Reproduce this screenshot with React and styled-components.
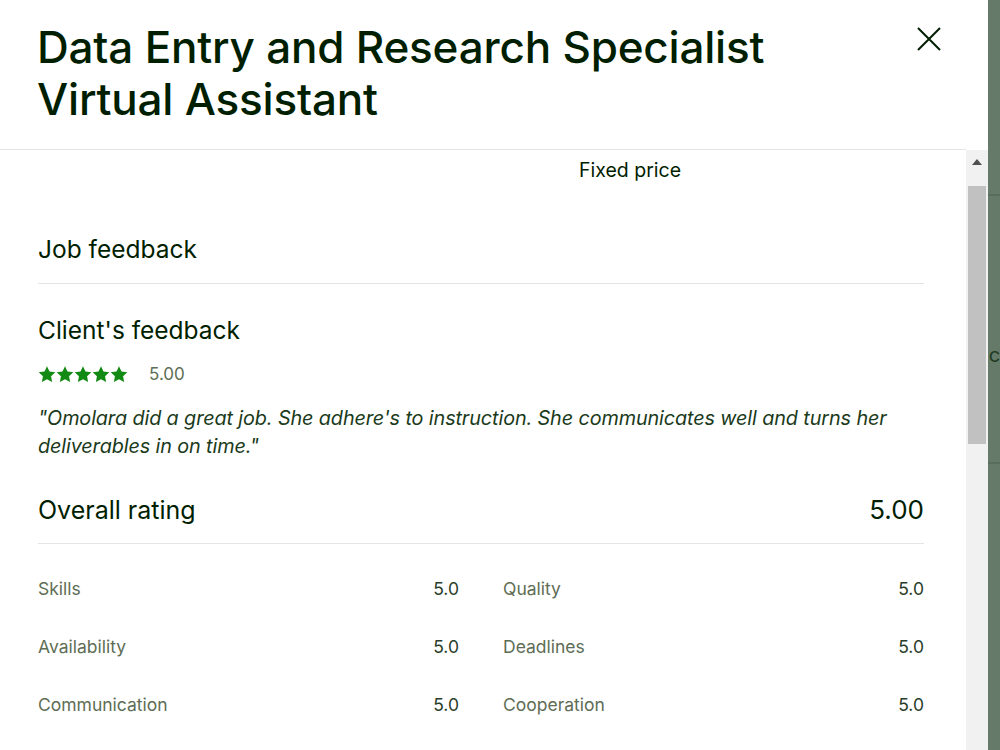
import styled, { createGlobalStyle } from "styled-components";

const GlobalStyle = createGlobalStyle`
  html, body {
    margin: 0;
    padding: 0;
    background: #667a69;
  }
  body {
    font-family: Inter, "Liberation Sans", Arial, sans-serif;
    color: #001e00;
  }
`;

const ratings = [
  ["Skills", "5.0", "Quality", "5.0"],
  ["Availability", "5.0", "Deadlines", "5.0"],
  ["Communication", "5.0", "Cooperation", "5.0"],
];

function Star() {
  return (
    <svg width="18" height="17" viewBox="0 0 24 23">
      <path
        d="M12 0.5l3.4 7.1 7.8 1-5.7 5.4 1.4 7.7L12 17.9l-6.9 3.8 1.4-7.7L0.8 8.6l7.8-1z"
        fill="#138a13"
      />
    </svg>
  );
}

function CloseIcon() {
  return (
    <svg width="26" height="26" viewBox="0 0 26 26">
      <path d="M2 2l22 22M24 2L2 24" stroke="#001e00" strokeWidth="2" fill="none" />
    </svg>
  );
}

function App() {
  return (
    <Page>
      <GlobalStyle />
      <Modal>
        <Header>
          <Title>
            Data Entry and Research Specialist
            <br />
            Virtual Assistant
          </Title>
          <CloseButton aria-label="Close">
            <CloseIcon />
          </CloseButton>
        </Header>
        <Body>
          <Content>
            <PriceRow>
              <span />
              <PriceType>Fixed price</PriceType>
            </PriceRow>
            <SectionTitle className="job">Job feedback</SectionTitle>
            <Rule />
            <SectionTitle className="client">Client's feedback</SectionTitle>
            <StarRow>
              <Stars>
                {[0, 1, 2, 3, 4].map((i) => (
                  <Star key={i} />
                ))}
              </Stars>
              <Score>5.00</Score>
            </StarRow>
            <Quote>
              "Omolara did a great job. She adhere's to instruction. She
              communicates well and turns her deliverables in on time."
            </Quote>
            <OverallRow>
              <SectionTitle>Overall rating</SectionTitle>
              <OverallScore>5.00</OverallScore>
            </OverallRow>
            <Rule />
            <RatingGrid>
              {ratings.flatMap((r) => [
                <RatingItem key={r[0]}>
                  <Label>{r[0]}</Label>
                  <Value>{r[1]}</Value>
                </RatingItem>,
                <RatingItem key={r[2]}>
                  <Label>{r[2]}</Label>
                  <Value>{r[3]}</Value>
                </RatingItem>,
              ])}
            </RatingGrid>
          </Content>
          <Scrollbar>
            <ArrowUp />
            <Thumb />
          </Scrollbar>
        </Body>
      </Modal>
      <Behind>
        <span>ic</span>
      </Behind>
    </Page>
  );
}

const Page = styled.div`
  display: flex;
  width: 1000px;
  height: 750px;
  overflow: hidden;
`;

const Modal = styled.section`
  width: 988px;
  flex-shrink: 0;
  background: #fff;
  display: flex;
  flex-direction: column;
`;

const Header = styled.header`
  height: 150px;
  margin-right: 22px;
  border-bottom: 1px solid #e2e6e2;
  display: flex;
  justify-content: space-between;
  align-items: flex-start;
  padding: 0 24px 0 37px;
  box-sizing: border-box;
`;

const Title = styled.h1`
  margin: 21px 0 0;
  font-size: 44px;
  line-height: 52px;
  font-weight: 500;
  letter-spacing: -0.2px;
  color: #001e00;
`;

const CloseButton = styled.button`
  border: none;
  background: none;
  padding: 0;
  margin-top: 26px;
  cursor: pointer;
  line-height: 0;
`;

const Body = styled.div`
  flex: 1;
  display: flex;
  min-height: 0;
`;

const Content = styled.div`
  flex: 1;
  padding: 0 42px 0 38px;
  overflow: hidden;
`;

const PriceRow = styled.div`
  display: grid;
  grid-template-columns: 541px 1fr;
  padding-top: 8px;
`;

const PriceType = styled.span`
  font-size: 19.5px;
  line-height: 24px;
`;

const SectionTitle = styled.h3`
  margin: 0;
  font-size: 24.5px;
  line-height: 30px;
  font-weight: 400;
  color: #001e00;

  &.job {
    margin: 52px 0 19px;
  }
  &.client {
    margin: 31px 0 16px;
  }
`;

const Rule = styled.div`
  height: 1px;
  background: #e1e6e1;
`;

const StarRow = styled.div`
  display: flex;
  align-items: center;
  gap: 21px;
  height: 26px;
`;

const Stars = styled.div`
  display: flex;
  gap: 0;
`;

const Score = styled.span`
  font-size: 17px;
  color: #5e6d55;
`;

const Quote = styled.p`
  margin: 17px 0 0;
  font-style: italic;
  font-size: 19.8px;
  line-height: 28px;
  color: #1a3a1a;
  letter-spacing: -0.1px;
`;

const OverallRow = styled.div`
  display: flex;
  justify-content: space-between;
  align-items: center;
  margin: 34px 0 18px;

  h3 {
    font-size: 25px;
  }
`;

const OverallScore = styled.span`
  font-size: 26px;
  color: #001e00;
`;

const RatingGrid = styled.div`
  display: grid;
  grid-template-columns: 1fr 1fr;
  column-gap: 44px;
  row-gap: 37px;
  padding-top: 34px;
`;

const RatingItem = styled.div`
  display: flex;
  justify-content: space-between;
  align-items: center;
  height: 21px;
`;

const Label = styled.span`
  font-size: 17.5px;
  color: #5e6d55;
`;

const Value = styled.span`
  font-size: 17.5px;
  color: #2a3d2a;
`;

const Scrollbar = styled.div`
  width: 22px;
  background: #f1f1f1;
  display: flex;
  flex-direction: column;
  align-items: center;
`;

const ArrowUp = styled.div`
  margin-top: 9px;
  width: 0;
  height: 0;
  border-left: 5px solid transparent;
  border-right: 5px solid transparent;
  border-bottom: 6px solid #505050;
`;

const Thumb = styled.div`
  margin-top: 21px;
  width: 18px;
  height: 258px;
  background: #c1c1c1;
`;

const Behind = styled.div`
  flex: 1;
  background: #667a69;
  overflow: hidden;
  background-image: linear-gradient(#5a6d5d, #5a6d5d),
    linear-gradient(#5a6d5d, #5a6d5d);
  background-size: 100% 2px, 100% 2px;
  background-position: 0 194px, 0 462px;
  background-repeat: no-repeat;

  span {
    display: block;
    margin: 343px 0 0 -4px;
    font-size: 20px;
    color: #1f3a1f;
    white-space: nowrap;
  }
`;

export default App;
